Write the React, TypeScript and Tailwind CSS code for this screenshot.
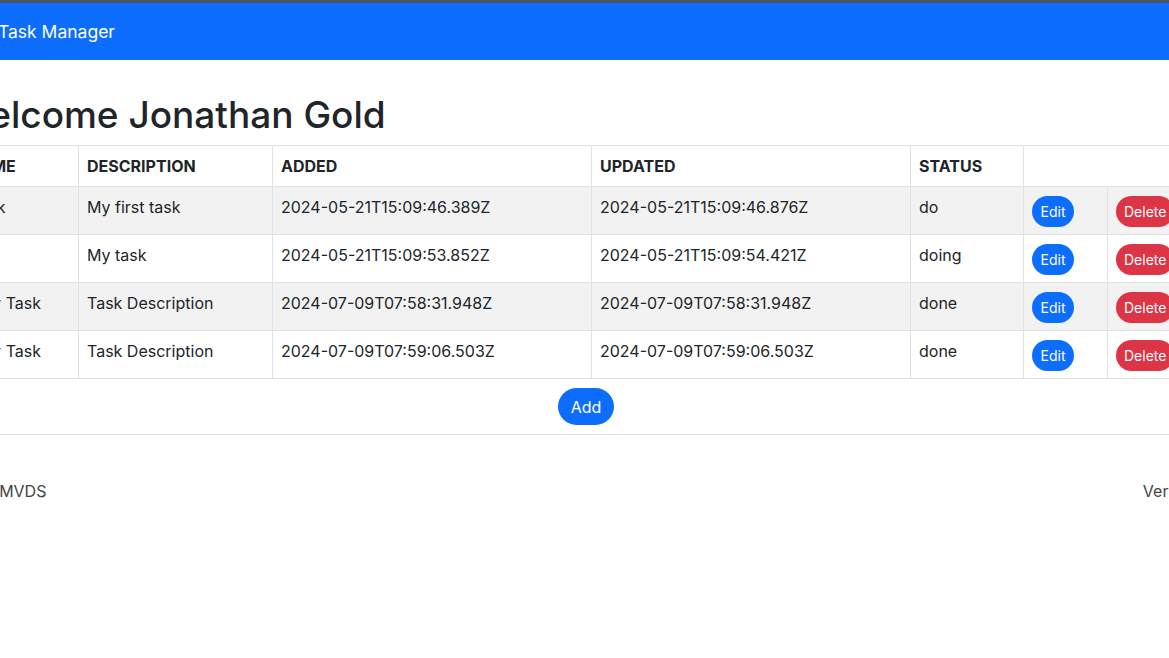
import React from "react";

const rows = [
  { name: "A tak", desc: "My first task", added: "2024-05-21T15:09:46.389Z", updated: "2024-05-21T15:09:46.876Z", status: "do" },
  { name: "Test", desc: "My task", added: "2024-05-21T15:09:53.852Z", updated: "2024-05-21T15:09:54.421Z", status: "doing" },
  { name: "New Task", desc: "Task Description", added: "2024-07-09T07:58:31.948Z", updated: "2024-07-09T07:58:31.948Z", status: "done" },
  { name: "New Task", desc: "Task Description", added: "2024-07-09T07:59:06.503Z", updated: "2024-07-09T07:59:06.503Z", status: "done" },
];

export default function App() {
  return (
    <div className="w-[1169px] h-[658px] overflow-hidden bg-white text-[#212529] font-['Inter',sans-serif]">
      <div className="h-[3px] bg-[#4a555f]" />
      <div className="-ml-[42px] w-[1256px]">
        <nav className="h-[57px] bg-[#0d6efd] flex items-center pl-[40px] w-[1300px]">
          <span className="text-[17.5px] text-white leading-[26px]">Task Manager</span>
        </nav>
        <h1 className="mt-[32px] mb-[7px] -ml-[4px] text-[37px] font-medium leading-[46px] whitespace-nowrap">Welcome Jonathan Gold</h1>
        <table className="w-[1256px] table-fixed border-collapse text-[16px] leading-6">
          <colgroup>
            <col className="w-[120px]" />
            <col className="w-[194px]" />
            <col className="w-[319px]" />
            <col className="w-[319px]" />
            <col className="w-[113px]" />
            <col className="w-[84px]" />
            <col className="w-[107px]" />
          </colgroup>
          <thead>
            <tr className="h-[41px]">
              {["NAME", "DESCRIPTION", "ADDED", "UPDATED", "STATUS"].map((h) => (
                <th key={h} className="border border-[#dee2e6] px-2 py-2 text-left font-bold align-top">{h}</th>
              ))}
              <th colSpan={2} className="border border-[#dee2e6]" />
            </tr>
          </thead>
          <tbody>
            {rows.map((r, i) => (
              <tr key={i} className={`h-[48px] ${i % 2 === 0 ? "bg-[#f2f2f2]" : "bg-white"}`}>
                <td className="border border-[#dee2e6] px-2 py-2 align-top whitespace-nowrap">{r.name}</td>
                <td className="border border-[#dee2e6] px-2 py-2 align-top whitespace-nowrap">{r.desc}</td>
                <td className="border border-[#dee2e6] px-2 py-2 align-top whitespace-nowrap">{r.added}</td>
                <td className="border border-[#dee2e6] px-2 py-2 align-top whitespace-nowrap">{r.updated}</td>
                <td className="border border-[#dee2e6] px-2 py-2 align-top whitespace-nowrap">{r.status}</td>
                <td className="border border-[#dee2e6] px-2 pt-[9px] pb-[6px] align-top">
                  <button className="h-[31px] w-[42px] rounded-full bg-[#0d6efd] text-white text-[14px] leading-[21px] block">Edit</button>
                </td>
                <td className="border border-[#dee2e6] px-2 pt-[9px] pb-[6px] align-top">
                  <button className="h-[31px] px-2 rounded-full bg-[#dc3545] text-white text-[14px] leading-[21px] block">Delete</button>
                </td>
              </tr>
            ))}
          </tbody>
        </table>
        <div className="flex justify-center py-[9px] border-b border-[#dee2e6] w-[1300px] pr-[44px]">
          <button className="h-[37px] w-[56px] rounded-full bg-[#0d6efd] text-white text-[16px] leading-6">Add</button>
        </div>
        <footer className="-mr-[25px] flex justify-between pl-[22px] pt-[44px] text-[16px] leading-6 text-[#444]">
          <span>© MVDS</span>
          <span>Version 1.0.0</span>
        </footer>
      </div>
    </div>
  );
}
